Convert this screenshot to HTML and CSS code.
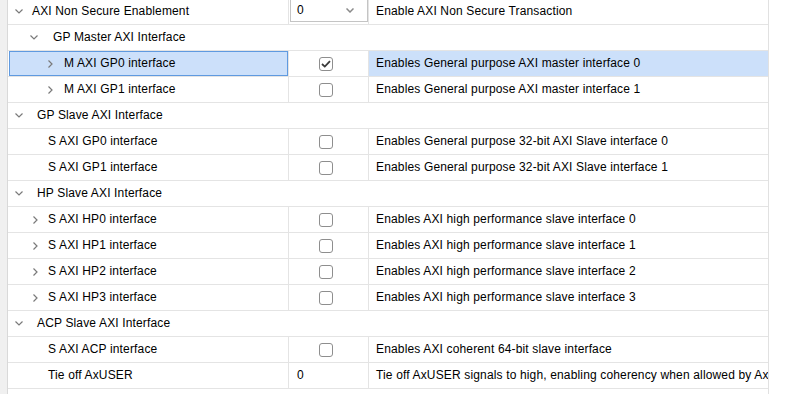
FILE: index.html
```html
<!DOCTYPE html>
<html>
	<head>
		<meta charset="utf-8">
		<title>AXI Interfaces</title>
		<link rel="stylesheet" href="styles.css">
	</head>
	<body>
		<div class="page">
			<!-- 左侧灰条 -->
			<div class="gutter"></div>

			<div class="table">
				<div class="row">
					<div class="name l-top"><span class="tw"><svg width="8" height="5"><path d="M0.5 0.5 L4 4 L7.5 0.5" /></svg></span>AXI Non Secure Enablement</div>
					<div class="val"><div class="combo"><span>0</span><svg width="8" height="5"><path d="M0.5 0.5 L4 4 L7.5 0.5" /></svg></div></div>
					<div class="desc">Enable AXI Non Secure Transaction</div>
				</div>

				<div class="row group">
					<div class="name l-gpm"><span class="tw"><svg width="8" height="5"><path d="M0.5 0.5 L4 4 L7.5 0.5" /></svg></span>GP Master AXI Interface</div>
				</div>
				<div class="row sel">
					<div class="name l-m"><span class="tw"><svg width="5" height="8"><path d="M0.5 0.5 L4 4 L0.5 7.5" /></svg></span>M AXI GP0 interface</div>
					<div class="val"><span class="check on"><svg width="10" height="8"><path d="M1 4 L3.8 6.6 L9 1.2" /></svg></span></div>
					<div class="desc">Enables General purpose AXI master interface 0</div>
				</div>
				<div class="row">
					<div class="name l-m"><span class="tw"><svg width="5" height="8"><path d="M0.5 0.5 L4 4 L0.5 7.5" /></svg></span>M AXI GP1 interface</div>
					<div class="val"><span class="check"></span></div>
					<div class="desc">Enables General purpose AXI master interface 1</div>
				</div>

				<div class="row group">
					<div class="name l-grp"><span class="tw"><svg width="8" height="5"><path d="M0.5 0.5 L4 4 L7.5 0.5" /></svg></span>GP Slave AXI Interface</div>
				</div>
				<div class="row">
					<div class="name l-leaf">S AXI GP0 interface</div>
					<div class="val"><span class="check"></span></div>
					<div class="desc">Enables General purpose 32-bit AXI Slave interface 0</div>
				</div>
				<div class="row">
					<div class="name l-leaf">S AXI GP1 interface</div>
					<div class="val"><span class="check"></span></div>
					<div class="desc">Enables General purpose 32-bit AXI Slave interface 1</div>
				</div>

				<div class="row group">
					<div class="name l-grp"><span class="tw"><svg width="8" height="5"><path d="M0.5 0.5 L4 4 L7.5 0.5" /></svg></span>HP Slave AXI Interface</div>
				</div>
				<div class="row">
					<div class="name l-hp"><span class="tw"><svg width="5" height="8"><path d="M0.5 0.5 L4 4 L0.5 7.5" /></svg></span>S AXI HP0 interface</div>
					<div class="val"><span class="check"></span></div>
					<div class="desc">Enables AXI high performance slave interface 0</div>
				</div>
				<div class="row">
					<div class="name l-hp"><span class="tw"><svg width="5" height="8"><path d="M0.5 0.5 L4 4 L0.5 7.5" /></svg></span>S AXI HP1 interface</div>
					<div class="val"><span class="check"></span></div>
					<div class="desc">Enables AXI high performance slave interface 1</div>
				</div>
				<div class="row">
					<div class="name l-hp"><span class="tw"><svg width="5" height="8"><path d="M0.5 0.5 L4 4 L0.5 7.5" /></svg></span>S AXI HP2 interface</div>
					<div class="val"><span class="check"></span></div>
					<div class="desc">Enables AXI high performance slave interface 2</div>
				</div>
				<div class="row">
					<div class="name l-hp"><span class="tw"><svg width="5" height="8"><path d="M0.5 0.5 L4 4 L0.5 7.5" /></svg></span>S AXI HP3 interface</div>
					<div class="val"><span class="check"></span></div>
					<div class="desc">Enables AXI high performance slave interface 3</div>
				</div>

				<div class="row group">
					<div class="name l-grp"><span class="tw"><svg width="8" height="5"><path d="M0.5 0.5 L4 4 L7.5 0.5" /></svg></span>ACP Slave AXI Interface</div>
				</div>
				<div class="row">
					<div class="name l-leaf">S AXI ACP interface</div>
					<div class="val"><span class="check"></span></div>
					<div class="desc">Enables AXI coherent 64-bit slave interface</div>
				</div>
				<div class="row">
					<div class="name l-leaf">Tie off AxUSER</div>
					<div class="val num">0</div>
					<div class="desc">Tie off AxUSER signals to high, enabling coherency when allowed by AxCACHE</div>
				</div>
			</div>
		</div>
	</body>
</html>
```

FILE: styles.css
```css
* {
	margin: 0;
	padding: 0;
	box-sizing: border-box;
}
body {
	font: 12px "Liberation Sans", Arial, sans-serif;
	letter-spacing: 0.15px;
	color: #000;
	background: #fff;
	overflow: hidden;
}
.page {
	display: flex;
	height: 394px;
	overflow: hidden;
}
.gutter {
	width: 8px;
	background: #f0f0f0;
	border-right: 1px solid #d9d9d9;
}
.table {
	width: 761px;
	margin-top: -1px;
	border-right: 1px solid #e1e1e1;
}
.row {
	display: grid;
	grid-template-columns: 281px 80px 399px;
	height: 26px;
	line-height: 25px;
	border-bottom: 1px solid #e4e4e4;
}
.row.group {
	grid-template-columns: 1fr;
}
.name {
	display: flex;
	align-items: center;
	white-space: nowrap;
	border-right: 1px solid #e4e4e4;
}
.group .name {
	border-right: none;
}
.val {
	display: flex;
	align-items: center;
	padding-left: 30px;
	border-right: 1px solid #e4e4e4;
}
.val.num {
	padding-left: 8px;
}
.desc {
	padding-left: 7px;
	white-space: nowrap;
	overflow: hidden;
}

/* 树形缩进 */
.tw {
	display: flex;
	align-items: center;
	height: 25px;
}
.tw svg path {
	fill: none;
	stroke: #7a7a7a;
	stroke-width: 1.2;
}
.l-top { padding-left: 7px; }
.l-top .tw { width: 17px; }
.l-gpm { padding-left: 22px; }
.l-gpm .tw { width: 23px; }
.l-m { padding-left: 40px; }
.l-m .tw { width: 16px; }
.l-grp { padding-left: 7px; }
.l-grp .tw { width: 22px; }
.l-leaf { padding-left: 40px; }
.l-hp { padding-left: 25px; }
.l-hp .tw { width: 15px; }

/* 选中行 */
.sel .name {
	margin-left: 1px;
	background: #cce0fa;
	box-shadow: inset 0 0 0 1px #5f9ae0;
}
.sel .name.l-m {
	padding-left: 39px;
}
.sel .desc {
	background: #cce0fa;
}

/* 下拉框 */
.row .val:has(.combo) {
	padding-left: 1px;
	align-items: flex-start;
}
.combo {
	width: 78px;
	height: 24px;
	margin-top: -1px;
	border: 1px solid #c4c4c4;
	display: flex;
	align-items: center;
	justify-content: space-between;
	padding: 0 13px 0 6px;
	background: #fff;
}
.combo svg path {
	fill: none;
	stroke: #8a8a8a;
	stroke-width: 1.5;
}

/* 复选框 */
.check {
	width: 14px;
	height: 14px;
	border: 1px solid #8e8e8e;
	border-radius: 3px;
	background: #fff;
	display: flex;
	align-items: center;
	justify-content: center;
}
.check svg path {
	fill: none;
	stroke: #3a3a3a;
	stroke-width: 1.8;
}
```
